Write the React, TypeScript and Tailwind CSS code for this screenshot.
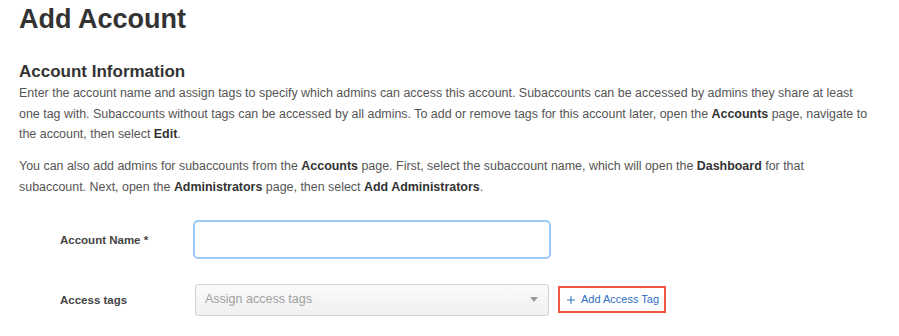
import { Plus } from 'lucide-react';

export default function App() {
  return (
    <div className="h-[336px] w-[899px] overflow-hidden bg-white font-['Liberation_Sans',Arial,sans-serif] text-[#333]">
      <div className="pl-[19px] pr-[8px]">
        <h1 className="pt-[3px] text-[27px] font-bold leading-[32px] text-[#333]">Add Account</h1>

        <h2 className="mt-[27px] text-[17px] font-bold leading-[20px] text-[#333]">Account Information</h2>
        <p className="mt-[1px] text-[12.45px] leading-[20.5px] text-[#555]">
          Enter the account name and assign tags to specify which admins can access this account. Subaccounts can be accessed by admins they share at least
          <br />
          one tag with. Subaccounts without tags can be accessed by all admins. To add or remove tags for this account later, open the{' '}
          <strong className="text-[#333]">Accounts</strong> page, navigate to
          <br />
          the account, then select <strong className="text-[#333]">Edit</strong>.
        </p>
        <p className="mt-[11px] text-[12.45px] leading-[21px] text-[#555]">
          You can also add admins for subaccounts from the <strong className="text-[#333]">Accounts</strong> page. First, select the subaccount name, which
          will open the <strong className="text-[#333]">Dashboard</strong> for that
          <br />
          subaccount. Next, open the <strong className="text-[#333]">Administrators</strong> page, then select{' '}
          <strong className="text-[#333]">Add Administrators</strong>.
        </p>

        <div className="mt-[22px] flex items-center">
          <label className="w-[174px] pl-[41px] pt-[3px] text-[11.5px] font-bold text-[#444]">Account Name *</label>
          <input className="h-[39px] w-[358px] rounded-[5px] border-2 border-[#9cc8f6] bg-white px-3 text-sm outline-none" />
        </div>

        <div className="mt-[25px] flex items-center">
          <label className="w-[176px] pl-[41px] pt-[3px] text-[11.5px] font-bold text-[#444]">Access tags</label>
          <div className="flex h-[32px] w-[354px] items-center justify-between rounded-[3px] border border-[#d4d4d4] bg-gradient-to-b from-[#fafafa] to-[#f0f0f0] pl-[9px] pr-[10px]">
            <span className="text-[12.5px] text-[#a0a0a0]">Assign access tags</span>
            <span className="h-0 w-0 border-x-[4px] border-t-[5px] border-x-transparent border-t-[#999]" />
          </div>
          <button
            type="button"
            className="ml-[9px] flex h-[27px] w-[108px] items-center gap-[4px] border-2 border-[#f2553f] pl-[5px] text-[11px] text-[#2f6fc4]"
          >
            <Plus className="h-[12px] w-[12px]" strokeWidth={2} />
            Add Access Tag
          </button>
        </div>
      </div>
    </div>
  );
}
